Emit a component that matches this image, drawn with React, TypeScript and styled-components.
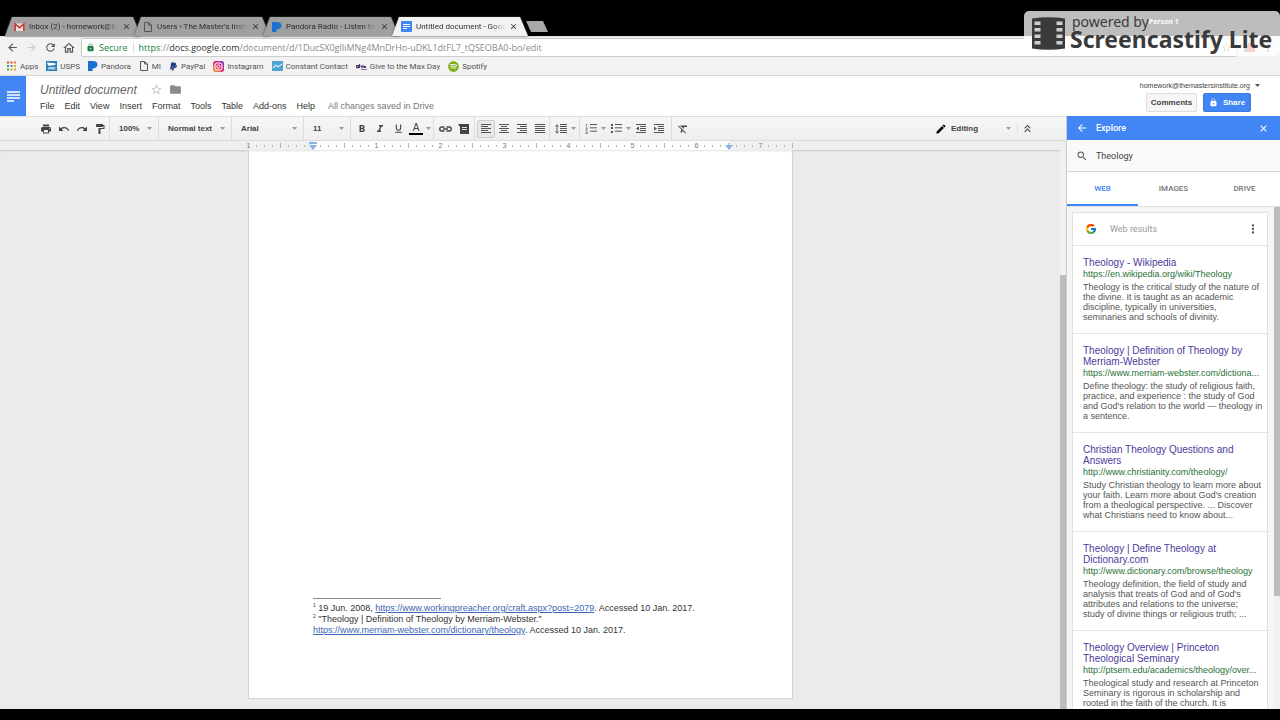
import React from "react";
import styled, { createGlobalStyle, css } from "styled-components";
import {
  MdArrowBack, MdArrowForward, MdRefresh, MdOutlineHome, MdLock, MdClose, MdSearch, MdMoreVert,
  MdPrint, MdUndo, MdRedo, MdFormatPaint, MdFormatClear, MdEdit,
  MdFolder, MdStarBorder, MdKeyboardDoubleArrowUp, MdFormatBold, MdFormatItalic, MdFormatUnderlined,
} from "react-icons/md";
import { FcGoogle } from "react-icons/fc";
import { FaPaypal, FaSpotify } from "react-icons/fa";

const ui = `"Open Sans", "Noto Sans", sans-serif`;
const arial = `"Liberation Sans", Arial, sans-serif`;
const roboto = `Roboto, "Liberation Sans", sans-serif`;

const GlobalStyle = createGlobalStyle`
  *, *::before, *::after { box-sizing: border-box; }
  body { margin: 0; background: #000; font-family: ${arial}; }
  button, select, input { font: inherit; color: inherit; margin: 0; }
  h1, h2, h3, p, ul { margin: 0; padding: 0; font-weight: normal; }
  svg { display: block; flex: none; }
`;

const Screen = styled.div`
  height: 100vh;
  min-width: 1000px;
  padding: 17px 0 11px;
  display: flex;
  flex-direction: column;
  overflow: hidden;
`;

const PlainButton = styled.button`
  border: 0;
  padding: 0;
  background: none;
  display: flex;
  align-items: center;
  justify-content: center;
  white-space: nowrap;
`;

/* Browser chrome */
const TabStrip = styled.div`
  display: flex;
  height: 19px;
  padding-left: 5px;
  font-family: ${roboto};
  font-size: 8px;
`;
const TabEdge = styled.div<{ $active?: boolean }>`
  position: relative;
  z-index: ${(p) => (p.$active ? 1 : 0)};
  width: 136px;
  margin-right: -7px;
  filter: drop-shadow(0 0 1px #444);
`;
const TabShape = styled.div<{ $active?: boolean }>`
  height: 19px;
  padding: 0 10px 0 9px;
  display: flex;
  align-items: center;
  color: ${(p) => (p.$active ? "#333" : "#2e2e2e")};
  background: ${(p) => (p.$active ? "#f2f2f2" : "#a0a0a0")};
  clip-path: polygon(7px 0, calc(100% - 8px) 0, 100% 100%, 0 100%);
`;
const TabTitle = styled.span`
  flex: 1;
  margin: 0 4px 0 4px;
  overflow: hidden;
  white-space: nowrap;
  mask-image: linear-gradient(90deg, #000 86%, transparent);
`;
const NewTab = styled(PlainButton)`
  width: 22px;
  height: 11px;
  margin: 4px 0 0 5px;
  background: #a8a8a8;
  clip-path: polygon(0 0, 17px 0, 100% 100%, 5px 100%);
`;
const NavBar = styled.div`
  display: flex;
  align-items: center;
  height: 22px;
  padding: 0 5px;
  gap: 5px;
  background: #f2f2f2;
  border-top: 1px solid #ddd;
  color: #555;
`;
const NavButton = styled(PlainButton)`
  width: 14px;
  height: 14px;
  &:disabled { color: #ccc; }
`;
const AddressBar = styled.div`
  flex: 1;
  display: flex;
  align-items: center;
  height: 19px;
  padding: 0 4px;
  background: #fff;
  border: 1px solid #ccc;
  border-radius: 2px;
  font-family: ${ui};
  font-size: 9px;
  white-space: nowrap;
  color: #8a8a8a;
`;
const PageUrl = styled.span`
  flex: 1;
`;
const Green = styled.span`
  color: #1a8043;
`;
const Secure = styled(Green)`
  display: flex;
  align-items: center;
  gap: 4px;
  padding-right: 5px;
  margin-right: 5px;
  border-right: 1px solid #ddd;
  line-height: 11px;
`;
const Host = styled.span`
  color: #333;
`;
const Bookmarks = styled.nav`
  display: flex;
  align-items: center;
  gap: 8px;
  height: 18px;
  padding: 0 0 1px 6px;
  background: #f2f2f2;
  border-bottom: 1px solid #d8d8d8;
  font-family: ${roboto};
  font-size: 8px;
`;
const Bookmark = styled.a`
  display: flex;
  align-items: center;
  gap: 3px;
  color: #555;
  text-decoration: none;
  white-space: nowrap;
`;

/* Recorder badge drawn over the browser */
const Watermark = styled.div`
  position: absolute;
  top: 11px;
  right: 0;
  z-index: 5;
  display: flex;
  align-items: center;
  gap: 5px;
  width: 256px;
  height: 45px;
  padding-left: 8px;
  border-radius: 5px;
  background: rgba(255, 255, 255, 0.74);
  font-family: "Noto Sans", "Open Sans", sans-serif;
  color: #3a3a3a;
  white-space: nowrap;
`;
const WatermarkText = styled.div`
  display: flex;
  flex-direction: column;
  align-self: flex-start;
  padding-top: 2px;
`;
const PoweredBy = styled.div`
  display: flex;
  align-items: center;
  font-size: 14px;
  line-height: 18px;
  padding-left: 2px;
`;
const Brand = styled.div`
  font-size: 23px;
  line-height: 17px;
  font-weight: 700;
`;
const Profile = styled(PlainButton)`
  font-size: 7px;
  font-weight: 700;
  color: #fff;
`;

/* Document header */
const DocHeader = styled.header`
  display: flex;
  height: 40px;
  background: #fff;
`;
const DocsHome = styled.a`
  width: 26px;
  display: flex;
  align-items: center;
  justify-content: center;
  background: #4285f4;
`;
const HeaderMain = styled.div`
  flex: 1;
  padding: 5px 0 0 14px;
`;
const TitleRow = styled.div`
  display: flex;
  align-items: center;
  height: 17px;
`;
const DocTitle = styled.input`
  width: 110px;
  padding: 0;
  border: 0;
  background: none;
  font-size: 12px;
  font-style: italic;
  color: #666;
`;
const TitleIcon = styled(PlainButton)`
  width: 13px;
  margin-right: 6px;
  color: #8a8a8a;
`;
const MenuRow = styled.div`
  display: flex;
  align-items: center;
  gap: 10px;
  height: 16px;
  font-size: 9px;
  color: #333;
`;
const SaveState = styled.span`
  margin-left: 3px;
  color: #777;
`;
const Account = styled.div`
  display: flex;
  flex-direction: column;
  align-items: flex-end;
  padding: 4px 20px 0 0;
`;
const AccountName = styled(PlainButton)`
  gap: 5px;
  height: 11px;
  font-size: 7px;
  color: #444;
`;
const ActionRow = styled.div`
  display: flex;
  gap: 6px;
  margin: 2px 9px 0 0;
`;
const Action = styled(PlainButton)<{ $primary?: boolean }>`
  gap: 5px;
  height: 19px;
  width: ${(p) => (p.$primary ? 48 : 51)}px;
  border: 1px solid ${(p) => (p.$primary ? "#3b78e0" : "#ddd")};
  border-radius: 2px;
  background: ${(p) => (p.$primary ? "#4285f4" : "#f6f6f6")};
  color: ${(p) => (p.$primary ? "#fff" : "#444")};
  font-size: 8px;
  font-weight: 700;
`;

/* Workspace: editor on the left, explore panel on the right */
const Workspace = styled.div`
  flex: 1;
  min-height: 0;
  display: flex;
`;
const Editor = styled.div`
  flex: 1;
  min-width: 0;
  display: flex;
  flex-direction: column;
`;
const Toolbar = styled.div`
  display: flex;
  align-items: stretch;
  height: 25px;
  padding-left: 37px;
  border-top: 1px solid #ddd;
  border-bottom: 1px solid #ddd;
  background: linear-gradient(#f7f7f7, #eee);
  font-size: 8px;
  font-weight: 700;
  color: #444;
`;
const Group = styled.div<{ $w?: number; $last?: boolean }>`
  display: flex;
  align-items: center;
  width: ${(p) => (p.$w ? p.$w + "px" : "auto")};
  padding-left: ${(p) => (p.$w ? 2 : 0)}px;
  border-right: ${(p) => (p.$last ? "0" : "1px solid #dcdcdc")};
`;
const Tool = styled(PlainButton)<{ $on?: boolean }>`
  width: 18px;
  height: 18px;
  border-radius: 2px;
  ${(p) => p.$on && css`
    background: #e8e8e8;
    border: 1px solid #ccc;
  `}
`;
const CaretButton = styled(PlainButton)`
  width: 7px;
  height: 18px;
`;
const Picker = styled.label<{ $w: number }>`
  display: grid;
  align-items: center;
  width: ${(p) => p.$w}px;
  border-right: 1px solid #dcdcdc;
  > * { grid-area: 1 / 1; }
  > svg { justify-self: end; margin-right: 6px; }
`;
const PickerSelect = styled.select`
  appearance: none;
  width: 100%;
  padding: 0 0 0 9px;
  border: 0;
  background: none;
  outline: 0;
`;
const ModeArea = styled.div`
  margin-left: auto;
  display: flex;
  align-items: center;
  padding-right: 30px;
  > svg { margin-right: -5px; color: #000; }
`;
const TextColor = styled.span`
  width: 14px;
  border-bottom: 2px solid #000;
  font-size: 10px;
  line-height: 11px;
  font-weight: 400;
  text-align: center;
`;

const RulerRow = styled.div`
  display: flex;
  justify-content: center;
  height: 9px;
  padding-right: 25px;
  background: #eee;
`;
const RulerSpan = styled.div<{ $live?: boolean }>`
  position: relative;
  display: flex;
  height: 9px;
  background: ${(p) => (p.$live ? "#fff" : "#f0f0f0")};
`;
const RulerPart = styled.div`
  position: relative;
  display: flex;
  align-items: center;
`;
const Eighth = styled.i<{ $tall?: boolean; $hidden?: boolean }>`
  width: 8px;
  height: ${(p) => (p.$tall ? 5 : 2)}px;
  border-right: 1px solid ${(p) => (p.$hidden ? "transparent" : "#b4b4b4")};
`;
const InchLabel = styled.span<{ $start?: boolean }>`
  position: absolute;
  ${(p) => (p.$start ? "left" : "right")}: -2px;
  top: 0;
  font-size: 7px;
  line-height: 9px;
  color: #777;
`;
const Marker = styled.svg`
  position: absolute;
  left: -4px;
  top: 1px;
  z-index: 2;
`;
const Canvas = styled.div`
  flex: 1;
  min-height: 0;
  display: flex;
  background: #ebebeb;
  box-shadow: inset 0 2px 2px -1px rgba(0, 0, 0, 0.15);
`;
const CanvasBody = styled.main`
  flex: 1;
  display: flex;
  justify-content: center;
  padding: 0 19px 10px 0;
`;
const Sheet = styled.article`
  width: 545px;
  padding: 0 64px 62px;
  display: flex;
  flex-direction: column;
  justify-content: flex-end;
  background: #fff;
  border: 1px solid #d4d4d4;
  border-top: 0;
  box-shadow: inset 0 2px 2px -1px rgba(0, 0, 0, 0.12);
`;
const Footnotes = styled.div`
  font-size: 9px;
  line-height: 11px;
  color: #333;
  white-space: nowrap;
  a { color: #3b66b5; }
  sup { font-size: 5px; line-height: 1px; }
  &::before {
    content: "";
    display: block;
    width: 128px;
    margin-bottom: 4px;
    border-top: 1px solid #888;
  }
`;
const ScrollTrack = styled.div<{ $from: number; $size?: number }>`
  width: 6px;
  flex: none;
  padding-top: ${(p) => p.$from}px;
  background: #f1f1f1;
  &::before {
    content: "";
    display: block;
    height: ${(p) => (p.$size ? p.$size + "px" : "100%")};
    background: #bcbcbc;
  }
`;

/* Explore panel */
const Panel = styled.aside`
  width: 214px;
  flex: none;
  display: flex;
  flex-direction: column;
  border-left: 1px solid #ccc;
  background: #f5f5f5;
  font-family: ${roboto};
`;
const PanelHeader = styled.div`
  display: flex;
  align-items: center;
  height: 24px;
  flex: none;
  padding: 0 11px 0 9px;
  background: #4285f4;
  color: #fff;
`;
const PanelTitle = styled.h2`
  flex: 1;
  margin-left: 8px;
  font-size: 9px;
  font-weight: 500;
`;
const SearchRow = styled.label`
  display: flex;
  align-items: center;
  gap: 8px;
  height: 32px;
  flex: none;
  padding-left: 9px;
  background: #f9f9f9;
  border-bottom: 1px solid #d8d8d8;
  color: #555;
`;
const SearchInput = styled.input`
  flex: 1;
  min-width: 0;
  padding: 0;
  border: 0;
  background: none;
  font-size: 9px;
  color: #444;
`;
const PanelTabs = styled.div`
  display: grid;
  grid-template-columns: repeat(3, 1fr);
  height: 35px;
  flex: none;
  background: #fff;
  border-bottom: 1px solid #e0e0e0;
`;
const PanelTab = styled(PlainButton)<{ $active?: boolean }>`
  font-size: 8px;
  font-weight: 500;
  color: ${(p) => (p.$active ? "#4285f4" : "#757575")};
  border-bottom: 2px solid ${(p) => (p.$active ? "#4285f4" : "transparent")};
`;
const PanelBody = styled.div`
  flex: 1;
  min-height: 0;
  display: flex;
  overflow: hidden;
`;
const Card = styled.section`
  flex: 1;
  min-width: 0;
  align-self: flex-start;
  margin: 5px 6px 0 5px;
  background: #fff;
  border: 1px solid #e0e0e0;
  font-family: ${arial};
`;
const CardHeader = styled.div`
  display: flex;
  align-items: center;
  height: 32px;
  padding: 0 7px 0 12px;
  font-family: ${roboto};
  font-size: 9px;
  color: #999;
`;
const CardTitle = styled.h3`
  flex: 1;
  margin-left: 13px;
  font-size: 9px;
`;
const Result = styled.article`
  padding: 11px 0 11px 10px;
  border-top: 1px solid #e4e4e4;
`;
const ResultTitle = styled.a`
  display: block;
  font-size: 10px;
  line-height: 11px;
  color: #4d3a9c;
  text-decoration: none;
  white-space: pre-line;
`;
const ResultUrl = styled.div`
  margin-top: 1px;
  font-size: 9px;
  line-height: 11px;
  color: #2b7038;
  white-space: nowrap;
`;
const Snippet = styled.p`
  margin-top: 2px;
  font-size: 9px;
  line-height: 10px;
  color: #555;
  white-space: pre;
`;

const Caret = () => (
  <svg width="5" height="3" viewBox="0 0 5 3"><path d="M0 0h5L2.500 3z" fill="#999" /></svg>
);
const FileIcon = () => (
  <svg width="10" height="10" viewBox="0 0 10 10"><path d="M1.500.500h4L8.500 3v6.500h-7zM5.500.500V3h3" fill="none" stroke="#555" /></svg>
);
const PandoraIcon = () => (
  <svg width="10" height="10" viewBox="0 0 10 10"><path d="M0 0h5C8 0 9.500 1.500 9.500 3.600 9.500 6 7.800 7.400 5.200 7.400H4.500V10H0z" fill="#1b6fd0" /></svg>
);
const GmailIcon = () => (
  <svg width="11" height="10" viewBox="0 0 11 10">
    <path d="M1 1.500h9v7.500H1z" fill="#e6e0de" />
    <path d="M1.200 9V2l4.300 3.700L9.800 2v7" fill="none" stroke="#cf3a30" strokeWidth="1.600" />
  </svg>
);
const DocIcon = () => (
  <svg width="11" height="11" viewBox="0 0 11 11">
    <rect width="11" height="11" rx="1" fill="#4285f4" />
    <path d="M2 3.500h7M2 5.500h7M2 7.500h4" stroke="#fff" />
  </svg>
);
const AppsIcon = () => (
  <svg width="11" height="10" viewBox="0 0 11 10">
    {["#d94a3d", "#d94a3d", "#e0762c", "#3aa757", "#4285f4", "#f0b400", "#3aa757", "#d99b22", "#e0a030"].map((c, i) => (
      <rect key={i} x={1 + (i % 3) * 3.5} y={Math.floor(i / 3) * 3.5 + 0.5} width="2" height="2" fill={c} />
    ))}
  </svg>
);
const UspsIcon = () => (
  <svg width="11" height="10" viewBox="0 0 11 10">
    <rect width="11" height="10" fill="#2c7fb6" />
    <path d="M1 1.500l8 .8c1 .3.600 1.200 0 1.700L4 4.800 2 4.500z" fill="#fff" />
    <path d="M2.500 6h7L9 8.500H1.500z" fill="#a5d0ea" />
  </svg>
);
const InstagramIcon = () => (
  <svg width="11" height="11" viewBox="0 0 11 11">
    <defs>
      <linearGradient id="insta" x1="0" y1="1" x2="1" y2="0">
        <stop offset="0" stopColor="#f9b233" /><stop offset=".5" stopColor="#dd2f6e" /><stop offset="1" stopColor="#7d36c4" />
      </linearGradient>
    </defs>
    <rect width="11" height="11" rx="2.500" fill="url(#insta)" />
    <rect x="2" y="2" width="7" height="7" rx="2" fill="none" stroke="#fff" />
    <circle cx="5.500" cy="5.500" r="1.600" fill="none" stroke="#fff" />
  </svg>
);
const ContactIcon = () => (
  <svg width="11" height="10" viewBox="0 0 11 10">
    <rect width="11" height="10" fill="#4ba3d0" />
    <path d="M1 7l3-3 2 2 4-3" fill="none" stroke="#d6ecf7" strokeWidth="1.200" />
  </svg>
);
const GiveIcon = () => (
  <svg width="11" height="10" viewBox="0 0 11 10">
    <path d="M.5 4.500h1.800v2.200H.5zM3.500 3v4M5 4.500l1 2 1-2M8 5.500h2M8 4.500v2h2" fill="none" stroke="#4c3b70" strokeWidth="1.200" />
    <path d="M5 8.500h6" stroke="#9a6ab0" />
  </svg>
);
const FilmIcon = () => (
  <svg width="33" height="33" viewBox="0 0 33 33">
    <path d="M0 1.500Q16.500-1 33 1.500V31.500Q16.500 34 0 31.500z" fill="#3a3a3a" />
    {[4.5, 11, 17.5, 24].map((y) => (
      <g key={y} fill="#cfcfcf">
        <rect x="2.500" y={y} width="6" height="3.500" />
        <rect x="24.500" y={y} width="6" height="3.500" />
      </g>
    ))}
  </svg>
);
const CommentIcon = () => (
  <svg width="11" height="10" viewBox="0 0 11 10">
    <path d="M0 0h11v10H2V3z" fill="#444" />
    <path d="M4 3.500h5M4 5.500h5" stroke="#ddd" />
  </svg>
);
const LinkIcon = () => (
  <svg width="13" height="6" viewBox="0 0 13 6">
    <path d="M5.500 1H2.800a2 2 0 0 0 0 4h2.700M7.500 1h2.700a2 2 0 0 1 0 4H7.500M4 3h5" fill="none" stroke="#444" strokeWidth="1.400" />
  </svg>
);
/* Rows of one-pixel text lines: [start, end] for each line */
const LinesIcon = ({ rows, children }: { rows: number[][]; children?: React.ReactNode }) => (
  <svg width="12" height="10" viewBox="0 0 12 10">
    {rows.map(([from, to], i) => (
      <path key={i} d={`M${from} ${i * (10 / rows.length) + 0.5}H${to}`} stroke="#555" />
    ))}
    {children}
  </svg>
);
const side = (n: number) => Array.from({ length: n }, () => [5, 12]);

const tabs = [
  { icon: <GmailIcon />, title: "Inbox (2) - homework@themasters" },
  { icon: <FileIcon />, title: "Users ‹ The Master's Institute" },
  { icon: <PandoraIcon />, title: "Pandora Radio - Listen to Free" },
  { icon: <DocIcon />, title: "Untitled document - Google Docs", active: true },
];

const bookmarks = [
  { icon: <AppsIcon />, name: "Apps" },
  { icon: <UspsIcon />, name: "USPS" },
  { icon: <PandoraIcon />, name: "Pandora" },
  { icon: <FileIcon />, name: "MI" },
  { icon: <FaPaypal size={9} color="#1f3f85" />, name: "PayPal" },
  { icon: <InstagramIcon />, name: "Instagram" },
  { icon: <ContactIcon />, name: "Constant Contact" },
  { icon: <GiveIcon />, name: "Give to the Max Day" },
  { icon: <FaSpotify size={11} color="#7fae12" />, name: "Spotify" },
];

const results = [
  {
    title: "Theology - Wikipedia",
    url: "https://en.wikipedia.org/wiki/Theology",
    text: "Theology is the critical study of the nature of\nthe divine. It is taught as an academic\ndiscipline, typically in universities,\nseminaries and schools of divinity.",
  },
  {
    title: "Theology | Definition of Theology by\nMerriam-Webster",
    url: "https://www.merriam-webster.com/dictiona...",
    text: "Define theology: the study of religious faith,\npractice, and experience : the study of God\nand God's relation to the world — theology in\na sentence.",
  },
  {
    title: "Christian Theology Questions and\nAnswers",
    url: "http://www.christianity.com/theology/",
    text: "Study Christian theology to learn more about\nyour faith. Learn more about God's creation\nfrom a theological perspective. ... Discover\nwhat Christians need to know about...",
  },
  {
    title: "Theology | Define Theology at\nDictionary.com",
    url: "http://www.dictionary.com/browse/theology",
    text: "Theology definition, the field of study and\nanalysis that treats of God and of God's\nattributes and relations to the universe;\nstudy of divine things or religious truth; ...",
  },
  {
    title: "Theology Overview | Princeton\nTheological Seminary",
    url: "http://ptsem.edu/academics/theology/over...",
    text: "Theological study and research at Princeton\nSeminary is rigorous in scholarship and\nrooted in the faith of the church. It is",
  },
];

const RulerTicks = ({ count = 8, label, start }: { count?: number; label?: string; start?: string }) => (
  <RulerPart>
    {start && <InchLabel $start>{start}</InchLabel>}
    {Array.from({ length: count }, (_, i) => (
      <Eighth key={i} $tall={i === 3} $hidden={i === count - 1 && (count === 8 || !!label)} />
    ))}
    {label && <InchLabel>{label}</InchLabel>}
  </RulerPart>
);

export default function App() {
  return (
    <Screen>
      <GlobalStyle />
      <TabStrip>
        {tabs.map((t) => (
          <TabEdge key={t.title} $active={t.active}>
            <TabShape $active={t.active}>
              {t.icon}
              <TabTitle>{t.title}</TabTitle>
              <PlainButton aria-label="Close tab"><MdClose size={9} /></PlainButton>
            </TabShape>
          </TabEdge>
        ))}
        <NewTab aria-label="New tab" />
      </TabStrip>
      <NavBar>
        <NavButton aria-label="Back"><MdArrowBack size={13} /></NavButton>
        <NavButton aria-label="Forward" disabled><MdArrowForward size={13} /></NavButton>
        <NavButton aria-label="Reload"><MdRefresh size={13} /></NavButton>
        <NavButton aria-label="Home"><MdOutlineHome size={14} /></NavButton>
        <AddressBar>
          <Secure><MdLock size={9} />Secure</Secure>
          <PageUrl>
            <Green>https</Green>://<Host>docs.google.com</Host>/document/d/1DucSX0glIiMNg4MnDrHo-uDKL1dtFL7_tQSEOBA0-bo/edit
          </PageUrl>
          <MdStarBorder size={11} />
        </AddressBar>
        <NavButton aria-label="Extension">
          <svg width="11" height="10" viewBox="0 0 11 10"><rect y="2" width="7" height="7" fill="#777" /><rect x="4" width="7" height="9" fill="#d64b45" /></svg>
        </NavButton>
        <NavButton aria-label="Browser menu"><MdMoreVert size={12} /></NavButton>
      </NavBar>
      <Bookmarks>
        {bookmarks.map((b) => <Bookmark key={b.name} href="#">{b.icon}{b.name}</Bookmark>)}
      </Bookmarks>
      <Watermark>
        <FilmIcon />
        <WatermarkText>
          <PoweredBy>powered by<Profile>Person 1</Profile></PoweredBy>
          <Brand>Screencastify Lite</Brand>
        </WatermarkText>
      </Watermark>

      <DocHeader>
        <DocsHome href="#" aria-label="Docs home">
          <svg width="13" height="11" viewBox="0 0 13 11"><path d="M0 1h13M0 4h13M0 7h13M0 10h7" stroke="#fff" strokeWidth="1.500" /></svg>
        </DocsHome>
        <HeaderMain>
          <TitleRow>
            <DocTitle aria-label="Document title" defaultValue="Untitled document" />
            <TitleIcon aria-label="Star"><MdStarBorder size={13} color="#c4c4c4" /></TitleIcon>
            <TitleIcon aria-label="Move to folder"><MdFolder size={13} /></TitleIcon>
          </TitleRow>
          <MenuRow>
            {["File", "Edit", "View", "Insert", "Format", "Tools", "Table", "Add-ons", "Help"].map((m) => (
              <PlainButton key={m}>{m}</PlainButton>
            ))}
            <SaveState>All changes saved in Drive</SaveState>
          </MenuRow>
        </HeaderMain>
        <Account>
          <AccountName>homework@themastersinstitute.org<svg width="5" height="3" viewBox="0 0 5 3"><path d="M0 0h5L2.500 3z" fill="#555" /></svg></AccountName>
          <ActionRow>
            <Action>Comments</Action>
            <Action $primary><MdLock size={9} />Share</Action>
          </ActionRow>
        </Account>
      </DocHeader>

      <Workspace>
        <Editor>
          <Toolbar>
            <Group>
              <Tool aria-label="Print"><MdPrint size={12} /></Tool>
              <Tool aria-label="Undo"><MdUndo size={12} /></Tool>
              <Tool aria-label="Redo"><MdRedo size={12} /></Tool>
              <Tool aria-label="Paint format"><MdFormatPaint size={12} /></Tool>
            </Group>
            <Picker $w={49}><PickerSelect aria-label="Zoom"><option>100%</option></PickerSelect><Caret /></Picker>
            <Picker $w={73}><PickerSelect aria-label="Style"><option>Normal text</option></PickerSelect><Caret /></Picker>
            <Picker $w={72}><PickerSelect aria-label="Font"><option>Arial</option></PickerSelect><Caret /></Picker>
            <Picker $w={47}><PickerSelect aria-label="Font size"><option>11</option></PickerSelect><Caret /></Picker>
            <Group $w={83}>
              <Tool aria-label="Bold"><MdFormatBold size={12} /></Tool>
              <Tool aria-label="Italic"><MdFormatItalic size={12} /></Tool>
              <Tool aria-label="Underline"><MdFormatUnderlined size={11} /></Tool>
              <Tool aria-label="Text color"><TextColor>A</TextColor></Tool>
              <CaretButton aria-label="Text color options"><Caret /></CaretButton>
            </Group>
            <Group $w={41}>
              <Tool aria-label="Link"><LinkIcon /></Tool>
              <Tool aria-label="Comment"><CommentIcon /></Tool>
            </Group>
            <Group $w={75}>
              <Tool aria-label="Align left" $on><LinesIcon rows={[[1, 11], [1, 8], [1, 11], [1, 8], [1, 11]]} /></Tool>
              <Tool aria-label="Align center"><LinesIcon rows={[[1, 11], [3, 9], [1, 11], [3, 9], [1, 11]]} /></Tool>
              <Tool aria-label="Align right"><LinesIcon rows={[[1, 11], [4, 11], [1, 11], [4, 11], [1, 11]]} /></Tool>
              <Tool aria-label="Justify"><LinesIcon rows={[[1, 11], [1, 11], [1, 11], [1, 11], [1, 11]]} /></Tool>
            </Group>
            <Group $w={30}>
              <Tool aria-label="Line spacing">
                <LinesIcon rows={side(5)}><path d="M2 1v8M.5 2.500L2 .8l1.500 1.700M.5 7.500L2 9.200l1.500-1.700" fill="none" stroke="#555" /></LinesIcon>
              </Tool>
              <CaretButton aria-label="Line spacing options"><Caret /></CaretButton>
            </Group>
            <Group $w={92}>
              <Tool aria-label="Numbered list">
                <LinesIcon rows={side(3)}><path d="M1.500 0v2.500M.5 4h2L1 6.200h1.500M.5 8h1.800v1.500H.5" fill="none" stroke="#666" strokeWidth=".8" /></LinesIcon>
              </Tool>
              <CaretButton aria-label="Numbered list options"><Caret /></CaretButton>
              <Tool aria-label="Bulleted list">
                <LinesIcon rows={side(3)}><path d="M1 0h2v2H1zM1 3h2v2H1zM1 7h2v2H1z" fill="#555" /></LinesIcon>
              </Tool>
              <CaretButton aria-label="Bulleted list options"><Caret /></CaretButton>
              <Tool aria-label="Decrease indent">
                <LinesIcon rows={[[1, 11], [5, 11], [5, 11], [5, 11], [1, 11]]}><path d="M4 2.500v4L1 4.500z" fill="#555" /></LinesIcon>
              </Tool>
              <Tool aria-label="Increase indent">
                <LinesIcon rows={[[1, 11], [5, 11], [5, 11], [5, 11], [1, 11]]}><path d="M1 2.500v4L4 4.500z" fill="#555" /></LinesIcon>
              </Tool>
            </Group>
            <Group $w={22} $last>
              <Tool aria-label="Clear formatting"><MdFormatClear size={12} /></Tool>
            </Group>
            <ModeArea>
              <MdEdit size={12} />
              <Picker $w={76}><PickerSelect aria-label="Mode"><option>Editing</option></PickerSelect><Caret /></Picker>
              <Tool aria-label="Hide the menus"><MdKeyboardDoubleArrowUp size={13} /></Tool>
            </ModeArea>
          </Toolbar>
          <RulerRow>
            <RulerSpan>
              <RulerTicks start="1" />
            </RulerSpan>
            <RulerSpan $live>
              <Marker width="8" height="8" viewBox="0 0 8 8"><path d="M0 0h8v2H0zM0 3h8L4 8z" fill="#8ab0ee" /></Marker>
              {["1", "2", "3", "4", "5", "6"].map((n) => <RulerTicks key={n} label={n} />)}
              <RulerTicks count={4} />
            </RulerSpan>
            <RulerSpan>
              <Marker width="8" height="8" viewBox="0 0 8 8"><path d="M0 3h8L4 8z" fill="#8ab0ee" /></Marker>
              <RulerTicks count={4} label="7" />
              <RulerTicks count={4} />
            </RulerSpan>
          </RulerRow>
          <Canvas>
            <CanvasBody>
              <Sheet>
                <Footnotes>
                  <p><sup>1</sup> 19 Jun. 2008, <a href="#">https://www.workingpreacher.org/craft.aspx?post=2079</a>. Accessed 10 Jan. 2017.</p>
                  <p><sup>2</sup> "Theology | Definition of Theology by Merriam-Webster."</p>
                  <p><a href="#">https://www.merriam-webster.com/dictionary/theology</a>. Accessed 10 Jan. 2017.</p>
                </Footnotes>
              </Sheet>
            </CanvasBody>
            <ScrollTrack $from={125} />
          </Canvas>
        </Editor>

        <Panel>
          <PanelHeader>
            <PlainButton aria-label="Back"><MdArrowBack size={12} /></PlainButton>
            <PanelTitle>Explore</PanelTitle>
            <PlainButton aria-label="Close"><MdClose size={11} /></PlainButton>
          </PanelHeader>
          <SearchRow>
            <MdSearch size={12} />
            <SearchInput aria-label="Search" defaultValue="Theology" />
          </SearchRow>
          <PanelTabs>
            <PanelTab $active>WEB</PanelTab>
            <PanelTab>IMAGES</PanelTab>
            <PanelTab>DRIVE</PanelTab>
          </PanelTabs>
          <PanelBody>
            <Card>
              <CardHeader>
                <FcGoogle size={12} />
                <CardTitle>Web results</CardTitle>
                <PlainButton aria-label="More"><MdMoreVert size={14} color="#555" /></PlainButton>
              </CardHeader>
              {results.map((r) => (
                <Result key={r.url}>
                  <ResultTitle href="#">{r.title}</ResultTitle>
                  <ResultUrl>{r.url}</ResultUrl>
                  <Snippet>{r.text}</Snippet>
                </Result>
              ))}
            </Card>
            <ScrollTrack $from={0} $size={389} />
          </PanelBody>
        </Panel>
      </Workspace>
    </Screen>
  );
}
